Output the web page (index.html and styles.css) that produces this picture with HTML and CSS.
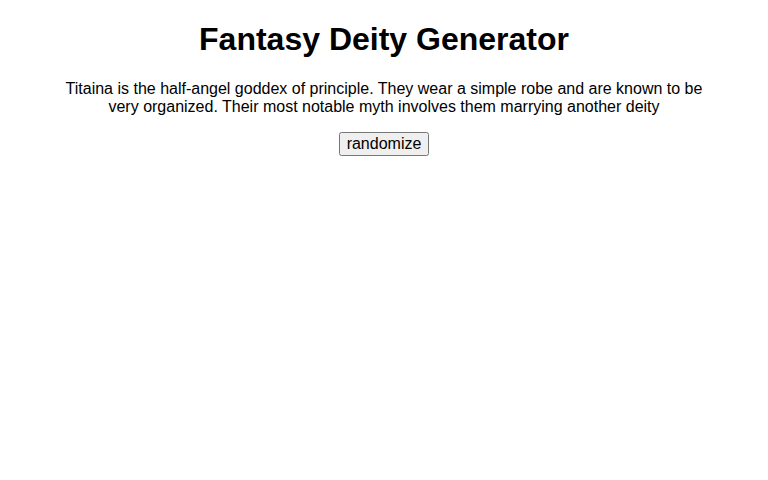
FILE: index.html
```html
<!DOCTYPE html>
<html lang="en">
<head>
    <meta charset="UTF-8">
    <meta name="viewport" content="width=device-width, initial-scale=1.0">
    <title>Fantasy Deity Generator</title>
    <link rel="stylesheet" href="styles.css">
</head>
<body>
    <div class="container">
        <h1>Fantasy Deity Generator</h1>
        <p id="deity">Titaina is the half-angel goddex of principle. They wear a simple robe and are known to be very organized. Their most notable myth involves them marrying another deity</p>
        <button class="randomize">randomize</button>
    </div>
</body>
</html>
```

FILE: styles.css
```css
body{
    margin: 0 8px;
    font-family: "Liberation Sans", Arial, sans-serif;
    color: black;
    background: white;
}
.container{
    text-align: center;
    padding: 0 50px;
}
.randomize{
    font-family: "Liberation Sans", Arial, sans-serif;
    font-size: 16px;
}
```
